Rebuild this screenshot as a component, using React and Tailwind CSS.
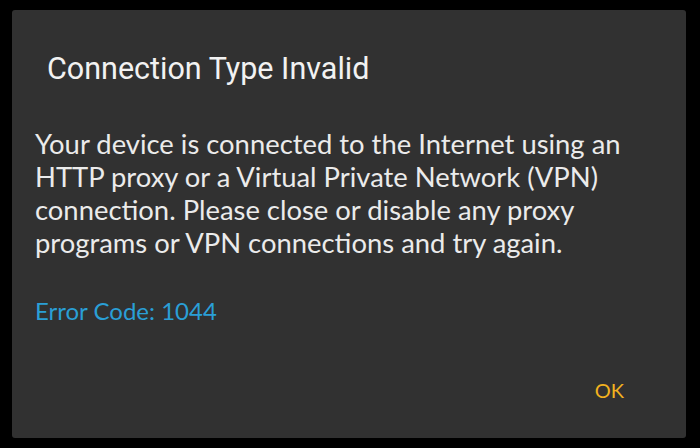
export default function App() {
  return (
    <div className="w-[700px] h-[448px] bg-black pt-[10px] pl-[12px]">
      <div className="w-[674px] h-[428px] bg-[#313131] rounded-[3px] relative">
        <h1 className="pt-[35px] pl-[35px] text-[30.5px] leading-[48px] text-[#f2f2f2] font-['Roboto',sans-serif]">
          Connection Type Invalid
        </h1>
        <p className="mt-[34px] pl-[23px] text-[27.4px] leading-[33px] text-[#ebebeb] font-['Lato',sans-serif]">
          Your device is connected to the Internet using an
          <br />
          HTTP proxy or a Virtual Private Network (VPN)
          <br />
          connection. Please close or disable any proxy
          <br />
          programs or VPN connections and try again.
        </p>
        <p className="mt-[37px] pl-[23px] text-[24px] leading-[30px] text-[#2a9fd6] font-['Lato',sans-serif]">
          Error Code: 1044
        </p>
        <div className="flex justify-end pr-[62px] mt-[50px]">
          <button className="text-[20px] leading-[28px] text-[#f2b21f] font-['Lato',sans-serif]">OK</button>
        </div>
      </div>
    </div>
  );
}
